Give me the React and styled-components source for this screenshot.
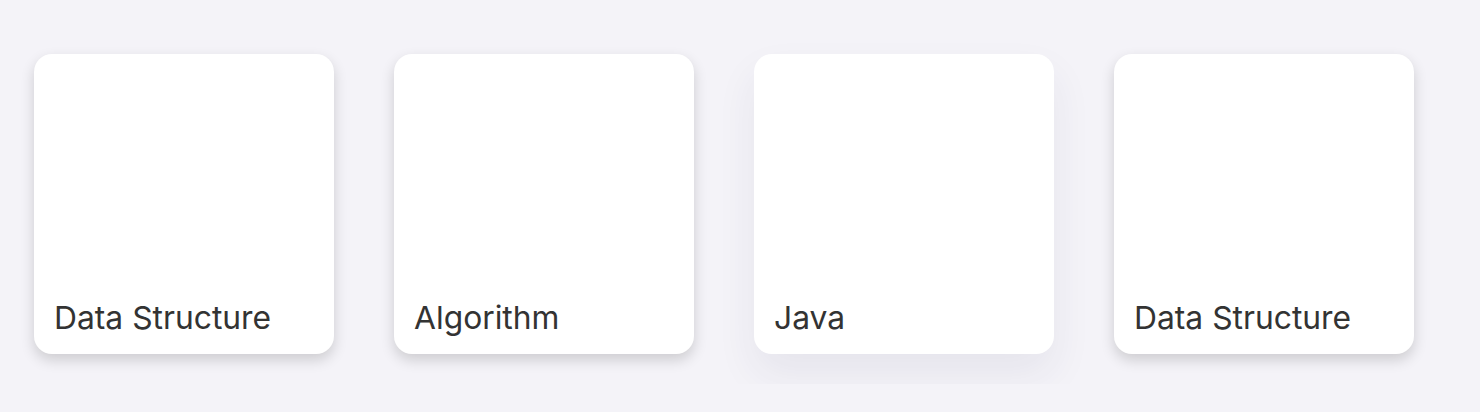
import React from "react";
import styled, { createGlobalStyle } from "styled-components";

const Global = createGlobalStyle`
  html, body { margin: 0; padding: 0; background: #f4f3f8; }
  body { font-family: Inter, "Noto Sans", sans-serif; }
`;

const Strip = styled.div`
  display: flex;
  gap: 60px;
  padding: 54px 34px 30px;
  overflow: hidden;
`;

const Card = styled.div`
  flex: 0 0 300px;
  height: 300px;
  box-sizing: border-box;
  background: #fff;
  border-radius: 18px;
  display: flex;
  align-items: flex-end;
  padding: 0 20px 20px;
  box-shadow: ${(p) =>
    p.$raised
      ? "0 20px 40px rgba(40, 40, 80, 0.07)"
      : "0 6px 14px rgba(0, 0, 0, 0.16)"};
`;

const Title = styled.span`
  font-size: 31.8px;
  color: #333333;
  line-height: 1;
`;

const items = [
  { t: "Data Structure" },
  { t: "Algorithm" },
  { t: "Java", raised: true },
  { t: "Data Structure" },
];

export default function App() {
  return (
    <>
      <Global />
      <Strip>
        {items.map((it, i) => (
          <Card key={i} $raised={it.raised}>
            <Title>{it.t}</Title>
          </Card>
        ))}
      </Strip>
    </>
  );
}
